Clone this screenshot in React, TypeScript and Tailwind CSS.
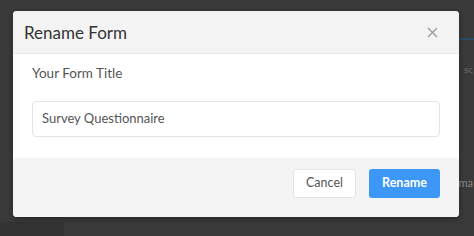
import React from "react";

export default function App() {
  return (
    <div className="relative w-[474px] h-[236px] overflow-hidden bg-[#3a3a3a] pt-[11px] pl-[13px] font-['Lato',sans-serif]">
      {/* blurred page behind the modal */}
      <div className="absolute right-0 top-[38px] w-[15px] h-[2px] bg-[#2c4a66]" />
      <div className="absolute right-[1px] top-[62px] text-[10px] text-[#6a6a6a]">sc</div>
      <div className="absolute right-[1px] top-[175px] text-[11px] text-[#8a8a8a]">ma</div>
      <div className="absolute left-0 bottom-0 w-[64px] h-[14px] bg-[#333]" />

      <div className="relative w-[446px] h-[206px] flex flex-col rounded-[4px] overflow-hidden bg-white shadow-[0_2px_6px_rgba(0,0,0,0.35)]">
        {/* header */}
        <div className="h-[43px] shrink-0 flex items-center justify-between pl-[11px] pr-[21px] bg-[#f3f3f3] border-b border-[#e6e6e6]">
          <h2 className="text-[17px] leading-none text-[#333]">Rename Form</h2>
          <svg width="11" height="11" viewBox="0 0 11 11" className="text-[#9a9a9a]">
            <path d="M1 1l9 9M10 1l-9 9" stroke="currentColor" strokeWidth="1.3" fill="none" />
          </svg>
        </div>

        {/* body */}
        <div className="flex-1 flex flex-col px-[19px] pt-[9px]">
          <label className="text-[13.5px] leading-[20px] text-[#555]">Your Form Title</label>
          <div className="mt-[18px] h-[36px] flex items-center px-[9px] rounded-[4px] border border-[#e3e3e3] text-[13px] text-[#555]">
            Survey Questionnaire
          </div>
        </div>

        {/* footer */}
        <div className="h-[59px] shrink-0 flex justify-end items-start gap-[13px] pt-[11px] pr-[19px] bg-[#f4f4f4]">
          <button className="w-[63px] h-[29px] rounded-[3px] bg-white border border-[#e3e3e3] text-[12.5px] text-[#555]">
            Cancel
          </button>
          <button className="w-[71px] h-[29px] rounded-[3px] bg-[#3d97f7] text-[12.5px] font-bold text-white">
            Rename
          </button>
        </div>
      </div>
    </div>
  );
}
